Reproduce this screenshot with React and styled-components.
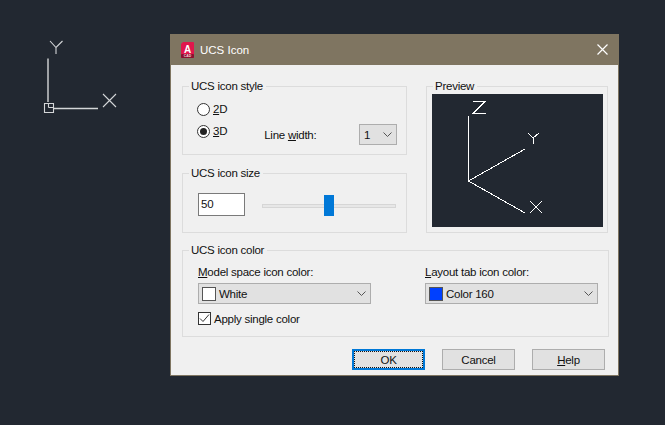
import React from 'react'
import styled, { createGlobalStyle } from 'styled-components'

const GlobalStyle = createGlobalStyle`
  html, body {
    margin: 0;
    height: 100%;
    background: #222831;
  }
  #root {
    height: 100%;
  }
`

const Desktop = styled.div`
  position: relative;
  width: 665px;
  height: 425px;
  overflow: hidden;
  background: #222831;
  font-family: "Liberation Sans", Arial, sans-serif;
  font-size: 11.5px;
  letter-spacing: -0.25px;
  color: #111;
`

const CanvasIcon = styled.svg`
  position: absolute;
  left: 40px;
  top: 38px;
`

const Dialog = styled.div`
  position: absolute;
  left: 170px;
  top: 34px;
  width: 449px;
  height: 342px;
  box-sizing: border-box;
  border: 1px solid #7f7561;
  border-top: 0;
  background: #f0f0f0;
  display: flex;
  flex-direction: column;
`

const TitleBar = styled.div`
  flex: 0 0 31px;
  display: flex;
  align-items: center;
  background: #7f7561;
  color: #fff;
  font-size: 11.5px;
  letter-spacing: 0;
  padding: 0 10px 0 10px;
  gap: 6px;
`

const TitleText = styled.span`
  flex: 1;
`

const Body = styled.div`
  flex: 1;
  display: flex;
  flex-direction: column;
  padding: 21px 9px 0 11px;
`

const TopRow = styled.div`
  display: flex;
  gap: 19px;
`

const LeftColumn = styled.div`
  width: 225px;
  display: flex;
  flex-direction: column;
  gap: 18px;
`

const GroupBox = styled.div`
  box-sizing: border-box;
  border: 1px solid #dcdcdc;
  height: ${p => p.$h}px;
  width: ${p => (p.$w ? `${p.$w}px` : 'auto')};
  margin-top: ${p => p.$mt || 0}px;
`

const Legend = styled.div`
  width: fit-content;
  margin: -8px 0 0 6px;
  padding: 0 3px 0 2px;
  height: 15px;
  line-height: 15px;
  background: #f0f0f0;
`

const StyleBody = styled.div`
  display: flex;
  flex-direction: column;
  gap: 8px;
  padding: 8px 9px 0 14px;
`

const RadioRow = styled.div`
  display: flex;
  align-items: center;
  gap: 3px;
  height: 14px;
`

const Radio = styled.span`
  box-sizing: border-box;
  width: 13px;
  height: 13px;
  border: 1px solid #333;
  border-radius: 50%;
  background: #fff;
  display: flex;
  align-items: center;
  justify-content: center;

  &::after {
    content: "";
    width: 7px;
    height: 7px;
    border-radius: 50%;
    background: ${p => (p.$on ? '#222' : 'transparent')};
  }
`

const LineWidthGroup = styled.div`
  flex: 1;
  align-self: flex-start;
  height: 21px;
  display: flex;
  align-items: center;
  justify-content: space-between;
  margin-left: 34px;
`

const Combo = styled.div`
  box-sizing: border-box;
  width: ${p => p.$w}px;
  height: 21px;
  border: 1px solid #adadad;
  background: #e1e1e1;
  display: flex;
  align-items: center;
  gap: 3px;
  padding: 0 4px 0 ${p => p.$pad || 3}px;
`

const ComboText = styled.span`
  flex: 1;
`

const Swatch = styled.span`
  box-sizing: border-box;
  width: 14px;
  height: 14px;
  border: 1px solid #555;
  background: ${p => p.$color};
`

const SizeBody = styled.div`
  display: flex;
  align-items: center;
  gap: 17px;
  padding: 12px 10px 0 15px;
`

const NumberBox = styled.div`
  box-sizing: border-box;
  width: 47px;
  height: 23px;
  border: 1px solid #7a7a7a;
  background: #fff;
  padding: 0 2px;
  line-height: 20px;
`

const SliderTrack = styled.div`
  position: relative;
  flex: 1;
  height: 4px;
  margin-top: 2px;
  border: 1px solid #d6d6d6;
  background: #e7e7e7;
  box-sizing: border-box;
`

const SliderThumb = styled.span`
  position: absolute;
  left: 61px;
  top: -10px;
  width: 10px;
  height: 21px;
  background: #0078d7;
`

const PreviewScreen = styled.div`
  margin: 0 4px 0 5px;
  height: 133px;
  background: #222831;
`

const ColorBody = styled.div`
  display: grid;
  grid-template-columns: 173px 173px;
  column-gap: 54px;
  padding: 6px 0 0 15px;
`

const FieldLabel = styled.div`
  height: 16px;
  line-height: 16px;
  margin-bottom: 3px;
`

const CheckRow = styled.div`
  display: flex;
  align-items: center;
  gap: 3px;
  margin-top: 8px;
`

const CheckBox = styled.span`
  box-sizing: border-box;
  width: 13px;
  height: 13px;
  border: 1px solid #333;
  background: #fff;
  display: flex;
`

const Buttons = styled.div`
  display: flex;
  justify-content: flex-end;
  gap: 17px;
  margin-top: 12px;
  padding-right: 4px;
`

const Button = styled.div`
  box-sizing: border-box;
  position: relative;
  width: 73px;
  height: 21px;
  border: ${p => (p.$primary ? '2px solid #0078d7' : '1px solid #adadad')};
  background: #e1e1e1;
  display: flex;
  align-items: center;
  justify-content: center;

  ${p => p.$primary && `
    &::after {
      content: "";
      position: absolute;
      inset: 0;
      border: 1px dotted #111;
    }
  `}
`

const Key = styled.span`
  text-decoration: underline;
  text-underline-offset: 1px;
`

const Chevron = () => (
  <svg width="9" height="5" viewBox="0 0 9 5" fill="none" stroke="#555" strokeWidth="1">
    <path d="M0.5 0.5 L4.5 4.5 L8.5 0.5" />
  </svg>
)

const AppLogo = () => (
  <svg width="13" height="16" viewBox="0 0 13 16">
    <path d="M2 0 H12 Q13 0 13 1 V15 Q13 16 12 16 H1 Q0 16 0 15 V2 Z" fill="#e0164c" />
    <rect x="0" y="12" width="13" height="4" rx="1" fill="#8a1230" />
    <text x="6.5" y="10.5" textAnchor="middle" fontSize="10" fontWeight="700" fontFamily="Liberation Sans, sans-serif" fill="#fff">A</text>
    <text x="6.5" y="15.4" textAnchor="middle" fontSize="3.4" fontWeight="700" fontFamily="Liberation Sans, sans-serif" fill="#ffd5de">CAD</text>
  </svg>
)

const CloseIcon = () => (
  <svg width="11" height="11" viewBox="0 0 11 11" stroke="#fff" strokeWidth="1.2" fill="none">
    <path d="M0.5 0.5 L10.5 10.5 M10.5 0.5 L0.5 10.5" />
  </svg>
)

const CheckMark = () => (
  <svg width="11" height="11" viewBox="0 0 11 11" fill="none" stroke="#333" strokeWidth="1">
    <path d="M1 5.5 L4 8.5 L10 1.5" />
  </svg>
)

const App = () => {
  return (
    <Desktop>
      <GlobalStyle />
      <CanvasIcon width="80" height="76" viewBox="0 0 80 76" fill="none" stroke="#d4d6d8" strokeWidth="1.1">
        <path d="M8 20.5 V64 M13.5 70.5 H58" strokeWidth="1.4" />
        <path d="M4.5 65.5 H13.5 V74.5 H4.5 Z M8.5 69.5 H13.5 M8.5 65.5 V69.5" />
        <path d="M10 3 L16 9.5 L22.5 3 M16 9.5 V16" />
        <path d="M63 56 L76 69 M76 56 L63 69" />
      </CanvasIcon>

      <Dialog>
        <TitleBar>
          <AppLogo />
          <TitleText>UCS Icon</TitleText>
          <CloseIcon />
        </TitleBar>
        <Body>
          <TopRow>
            <LeftColumn>
              <GroupBox $h={69}>
                <Legend>UCS icon style</Legend>
                <StyleBody>
                  <RadioRow>
                    <Radio />
                    <span><Key>2</Key>D</span>
                  </RadioRow>
                  <RadioRow>
                    <Radio $on />
                    <span><Key>3</Key>D</span>
                    <LineWidthGroup>
                      <span>Line <Key>w</Key>idth:</span>
                      <Combo $w={38} $pad={4}>
                        <ComboText>1</ComboText>
                        <Chevron />
                      </Combo>
                    </LineWidthGroup>
                  </RadioRow>
                </StyleBody>
              </GroupBox>
              <GroupBox $h={60}>
                <Legend>UCS icon size</Legend>
                <SizeBody>
                  <NumberBox>50</NumberBox>
                  <SliderTrack>
                    <SliderThumb />
                  </SliderTrack>
                </SizeBody>
              </GroupBox>
            </LeftColumn>
            <GroupBox $w={182} $h={147}>
              <Legend>Preview</Legend>
              <PreviewScreen>
                <svg width="171" height="133" viewBox="0 0 171 133" fill="none" stroke="#fff" strokeWidth="1" shapeRendering="crispEdges">
                  <path d="M36.5 22 V88" />
                  <path d="M36.5 87 L93 55" />
                  <path d="M36.5 87 L93 119" />
                  <path d="M41 7.5 H53 L41 19.5 H54" />
                  <path d="M96 39 L101 44 L107 39 M101 44 V50" />
                  <path d="M98 107 L110 119 M110 107 L98 119" />
                </svg>
              </PreviewScreen>
            </GroupBox>
          </TopRow>
          <GroupBox $w={427} $h={87} $mt={17}>
            <Legend>UCS icon color</Legend>
            <ColorBody>
              <div>
                <FieldLabel><Key>M</Key>odel space icon color:</FieldLabel>
                <Combo $w={173}>
                  <Swatch $color="#fff" />
                  <ComboText>White</ComboText>
                  <Chevron />
                </Combo>
                <CheckRow>
                  <CheckBox><CheckMark /></CheckBox>
                  <span>Apply single color</span>
                </CheckRow>
              </div>
              <div>
                <FieldLabel><Key>L</Key>ayout tab icon color:</FieldLabel>
                <Combo $w={173}>
                  <Swatch $color="#0040ff" />
                  <ComboText>Color 160</ComboText>
                  <Chevron />
                </Combo>
              </div>
            </ColorBody>
          </GroupBox>
          <Buttons>
            <Button $primary>OK</Button>
            <Button>Cancel</Button>
            <Button><Key>H</Key>elp</Button>
          </Buttons>
        </Body>
      </Dialog>
    </Desktop>
  )
}

export default App
